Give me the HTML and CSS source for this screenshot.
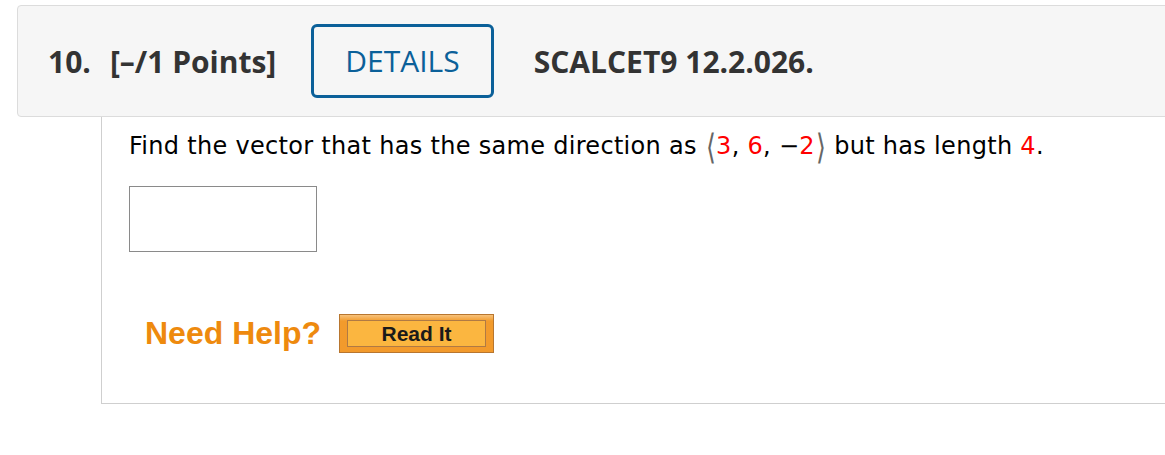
FILE: index.html
```html
<!DOCTYPE html>
<html lang="en">
<head>
<meta charset="utf-8">
<title>Question 10</title>
<link rel="stylesheet" href="styles.css">
</head>
<body>
<div class="question">
  <div class="q-header">
    <span class="q-num">10.</span>
    <span class="q-points">[–/1 Points]</span>
    <button class="details-btn" type="button">DETAILS</button>
    <span class="q-ref">SCALCET9 12.2.026.</span>
  </div>
  <div class="q-body">
    <p class="q-text">Find the vector that has the same direction as <span class="ang">⟨</span><span class="red">3</span>, <span class="red">6</span>, −<span class="red">2</span><span class="ang">⟩</span> but has length <span class="red">4</span>.</p>
    <input class="answer" type="text" aria-label="answer">
    <div class="help-row">
      <span class="need-help">Need Help?</span>
      <span class="read-it"><span class="read-it-inner">Read It</span></span>
    </div>
  </div>
</div>
</body>
</html>
```
FILE: styles.css
```css
html, body {
  margin: 0;
  padding: 0;
  background: #fff;
  overflow: hidden;
}

.question {
  margin: 5px -40px 0 17px;
}

.q-header {
  box-sizing: border-box;
  height: 112px;
  display: flex;
  align-items: center;
  padding-left: 30px;
  background: #f6f6f6;
  border: 1px solid #dcdcdc;
  border-radius: 4px;
  font-family: "Open Sans", sans-serif;
  font-size: 30px;
  color: #333;
}

.q-num {
  font-weight: 700;
  margin-right: 19px;
}

.q-points {
  font-weight: 700;
  margin-right: 35px;
}

.details-btn {
  box-sizing: border-box;
  height: 74px;
  padding: 0 31px;
  margin: 0 40px 0 0;
  border: 3px solid #0b6099;
  border-radius: 6px;
  background: transparent;
  color: #0b6099;
  font-family: "Open Sans", sans-serif;
  font-size: 30px;
  font-weight: 400;
  line-height: 68px;
}

.q-ref {
  font-weight: 700;
}

.q-body {
  margin-left: 84px;
  border-left: 1px solid #cfcfcf;
  border-bottom: 1px solid #cfcfcf;
  padding: 15px 0 50px 27px;
  font-family: "DejaVu Sans", Verdana, sans-serif;
  font-size: 24px;
  color: #000;
}

.q-text {
  margin: 0;
  line-height: 28px;
  letter-spacing: 0.3px;
}

.red {
  color: #f00;
}

.ang {
  display: inline-block;
  color: #666;
  font-family: "DejaVu Sans", sans-serif;
  font-weight: 300;
  transform: scale(1.05, 1.45) translateY(1px);
  margin: 0 1px;
}

.answer {
  display: block;
  box-sizing: border-box;
  width: 188px;
  height: 66px;
  margin: 26px 0 0 0;
  padding: 0;
  border: 1px solid #8a8a8a;
  background: #fff;
}

.help-row {
  display: flex;
  align-items: center;
  margin-top: 62px;
  padding-left: 16px;
}

.need-help {
  font-family: "Liberation Sans", Arial, sans-serif;
  font-weight: 700;
  font-size: 32px;
  color: #ee8a0e;
  margin-right: 18px;
}

.read-it {
  box-sizing: border-box;
  width: 155px;
  height: 39px;
  padding: 5px 7px;
  border: 1px solid #b8762f;
  background: linear-gradient(#f7c27c 0, #f29b2c 6px, #f29a2c 100%);
  display: flex;
}

.read-it-inner {
  flex: 1;
  display: flex;
  align-items: center;
  justify-content: center;
  border: 1px solid #b07a44;
  background: #fbb640;
  font-family: "Liberation Sans", Arial, sans-serif;
  font-weight: 700;
  font-size: 21px;
  color: #1a1a1a;
}
```
